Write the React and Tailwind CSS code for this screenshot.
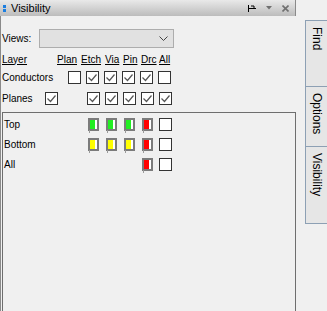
import React from "react";

const font = { fontFamily: '"Liberation Sans", Arial, sans-serif' };

function Check({ checked }) {
  return (
    <div className="w-[13px] h-[13px] border border-[#333333] bg-white flex items-center justify-center shrink-0">
      {checked && (
        <svg width="11" height="11" viewBox="0 0 11 11">
          <path d="M1.5 5.5 L4.5 8.5 L9.5 2.5" fill="none" stroke="#555555" strokeWidth="1.2" />
        </svg>
      )}
    </div>
  );
}

function Swatch({ color }) {
  return (
    <div className="relative w-[11px] h-[13px] bg-[#7b7b7b] p-[2px] shrink-0">
      <div className="w-full h-full bg-white flex">
        <div className="h-full w-[5px]" style={{ background: color }} />
      </div>
      <div className="absolute left-[1px] bottom-[-2px] w-[1px] h-[3px] bg-[#9a9a9a]" />
    </div>
  );
}

function Tab({ label, h }) {
  return (
    <div
      className={`w-[22px] ${h} border-l border-t border-b border-[#8da0b4] bg-[#e6e6e6] flex justify-center pt-[6px]`}
    >
      <span className="text-[12px] text-black leading-none" style={{ writingMode: "vertical-rl" }}>
        {label}
      </span>
    </div>
  );
}

export default function App() {
  const green = "#22ee22";
  const yellow = "#ffff00";
  const red = "#ff0000";
  return (
    <div className="w-[327px] h-[311px] bg-[#f0f0f0] flex overflow-hidden text-black" style={font}>
      <div className="w-[296px] h-full flex flex-col">
        {/* title bar */}
        <div className="h-[16px] border-r border-[#8a8a8a] bg-gradient-to-b from-[#e9e9e9] to-[#bcbcbc] flex items-center relative">
          <div className="ml-[3px] flex flex-col gap-[1px]">
            <div className="w-[3px] h-[3px] bg-[#1b7ee0]" />
            <div className="w-[3px] h-[3px] bg-[#1b7ee0]" />
          </div>
          <span className="ml-[5px] text-[11px] leading-none">Visibility</span>
          <div className="ml-auto flex items-center gap-[10px] mr-[6px]">
            <svg width="8" height="7" viewBox="0 0 8 7">
              <path d="M0.5 0 V7 M0 3.5 H8 M3 1 H6 V3.5" fill="none" stroke="#000" strokeWidth="1" />
            </svg>
            <svg width="6" height="4" viewBox="0 0 6 4">
              <path d="M0 0 H6 L3 3.5 Z" fill="#707070" />
            </svg>
            <svg width="7" height="7" viewBox="0 0 7 7">
              <path d="M0.5 0.5 L6.5 6.5 M6.5 0.5 L0.5 6.5" stroke="#707070" strokeWidth="1.6" />
            </svg>
          </div>
        </div>
        {/* body */}
        <div className="flex-1 border-l border-[#8a8a8a] flex flex-col text-[10px]">
          <div className="flex items-center h-[19px] mt-[13px]">
            <span className="ml-[1px] w-[37px]">Views:</span>
            <div className="w-[135px] h-[19px] border border-[#adadad] bg-[#e1e1e1] flex items-center justify-end pr-[5px]">
              <svg width="9" height="5" viewBox="0 0 9 5">
                <path d="M0.5 0.5 L4.5 4.5 L8.5 0.5" fill="none" stroke="#444" strokeWidth="1" />
              </svg>
            </div>
          </div>
          <div className="flex items-center h-[14px] mt-[4px] underline">
            <span className="ml-[1px] w-[55px]">Layer</span>
            <span className="w-[24px]">Plan</span>
            <span className="w-[24px]">Etch</span>
            <span className="w-[18px]">Via</span>
            <span className="w-[18px]">Pin</span>
            <span className="w-[18px]">Drc</span>
            <span>All</span>
          </div>
          <div className="flex items-center h-[13px] mt-[5px]">
            <span className="ml-[1px] w-[66px]">Conductors</span>
            <div className="flex gap-[5px]">
              <Check />
              <Check checked />
              <Check checked />
              <Check checked />
              <Check checked />
              <Check />
            </div>
          </div>
          <div className="flex items-center h-[13px] mt-[8px]">
            <span className="ml-[1px] w-[43px]">Planes</span>
            <Check checked />
            <div className="flex gap-[5px] ml-[29px]">
              <Check checked />
              <Check checked />
              <Check checked />
              <Check checked />
              <Check checked />
            </div>
          </div>
          {/* list box */}
          <div className="flex-1 mt-[7px] ml-[1px] border-l border-t border-r border-[#6e6e6e] flex flex-col">
            <div className="flex items-center h-[13px] mt-[5px]">
              <span className="ml-[1px] w-[84px]">Top</span>
              <div className="flex gap-[7px]">
                <Swatch color={green} />
                <Swatch color={green} />
                <Swatch color={green} />
                <Swatch color={red} />
              </div>
              <div className="ml-[6px]"><Check /></div>
            </div>
            <div className="flex items-center h-[13px] mt-[7px]">
              <span className="ml-[1px] w-[84px]">Bottom</span>
              <div className="flex gap-[7px]">
                <Swatch color={yellow} />
                <Swatch color={yellow} />
                <Swatch color={yellow} />
                <Swatch color={red} />
              </div>
              <div className="ml-[6px]"><Check /></div>
            </div>
            <div className="flex items-center h-[13px] mt-[7px]">
              <span className="ml-[1px] w-[138px]">All</span>
              <Swatch color={red} />
              <div className="ml-[6px]"><Check /></div>
            </div>
          </div>
        </div>
      </div>
      {/* tabs */}
      <div className="flex-1 flex flex-col items-end pt-[20px]">
        <Tab label="Find" h="h-[67px]" />
        <Tab label="Options" h="h-[60px] border-t-0" />
        <Tab label="Visibility" h="h-[77px] border-t-0" />
      </div>
    </div>
  );
}
